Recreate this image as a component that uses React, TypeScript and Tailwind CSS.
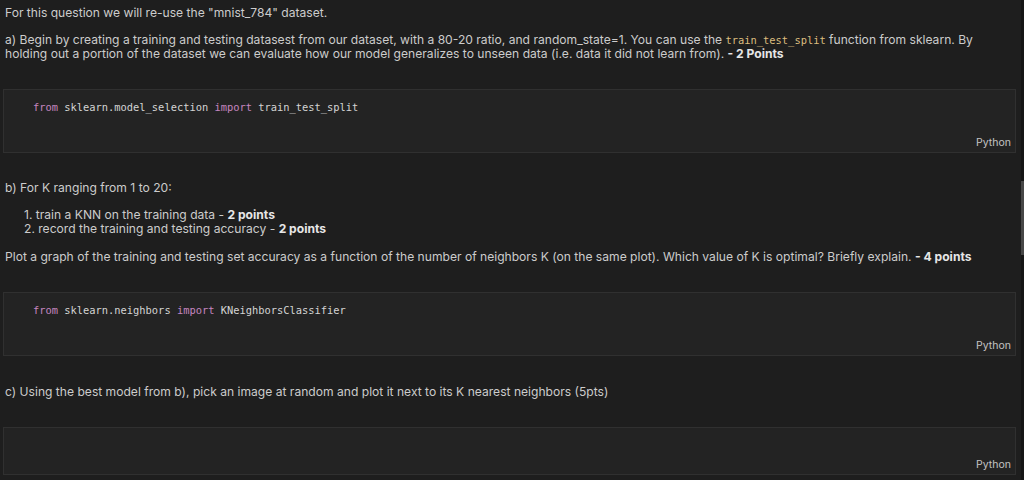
import React from "react";

const mono = { fontFamily: '"DejaVu Sans Mono", Menlo, monospace' };

function Cell({ children, h }: { children?: React.ReactNode; h: string }) {
  return (
    <div className={`ml-[3px] w-[1013px] ${h} bg-[#232323] border border-[#303030] flex flex-col justify-between`}>
      <div className="pl-[29px] pt-[10px] text-[10.4px] leading-[14px] text-[#d4d4d4] whitespace-pre" style={mono}>
        {children}
      </div>
      <div className="self-end pr-[4px] pb-[2px] text-[10.5px] leading-[14px] text-[#c4c4c4] font-['Inter',sans-serif]">
        Python
      </div>
    </div>
  );
}

const B = ({ children }: { children: React.ReactNode }) => (
  <span className="font-bold text-[#e6e6e6]">{children}</span>
);

export default function App() {
  return (
    <div className="relative w-[1024px] h-[480px] overflow-hidden bg-[#1e1e1e] font-['Inter',sans-serif] text-[12.1px] leading-[14px] text-[#cccccc]">
      <div className="absolute right-0 top-0 w-[3px] h-full bg-[#161616]">
        <div className="mt-[181px] h-[74px] bg-[#474747]" />
      </div>
      <div className="pt-[6px]">
        <p className="pl-[5px]">For this question we will re-use the "mnist_784" dataset.</p>
        <p className="pl-[5px] mt-[13px] w-[1010px]">
          a) Begin by creating a training and testing datasest from our dataset, with a 80-20 ratio, and random_state=1. You can use the{" "}
          <span className="text-[10.4px] text-[#dcbd7e]" style={mono}>train_test_split</span> function from sklearn. By
          <br />
          holding out a portion of the dataset we can evaluate how our model generalizes to unseen data (i.e. data it did not learn from). <B>- 2 Points</B>
        </p>
        <div className="mt-[28px]">
          <Cell h="h-[64px]">
            <span className="text-[#c586c0]">from</span> sklearn.model_selection <span className="text-[#c586c0]">import</span> train_test_split
          </Cell>
        </div>
        <p className="pl-[5px] mt-[28px]">b) For K ranging from 1 to 20:</p>
        <ol className="mt-[13px] pl-[24px]">
          <li>1. train a KNN on the training data - <B>2 points</B></li>
          <li>2. record the training and testing accuracy - <B>2 points</B></li>
        </ol>
        <p className="pl-[5px] mt-[14px]">
          Plot a graph of the training and testing set accuracy as a function of the number of neighbors K (on the same plot). Which value of K is optimal? Briefly explain. <B>- 4 points</B>
        </p>
        <div className="mt-[28px]">
          <Cell h="h-[64px]">
            <span className="text-[#c586c0]">from</span> sklearn.neighbors <span className="text-[#c586c0]">import</span> KNeighborsClassifier
          </Cell>
        </div>
        <p className="pl-[5px] mt-[29px]">c) Using the best model from b), pick an image at random and plot it next to its K nearest neighbors (5pts)</p>
        <div className="mt-[28px]">
          <Cell h="h-[48px]" />
        </div>
      </div>
    </div>
  );
}
